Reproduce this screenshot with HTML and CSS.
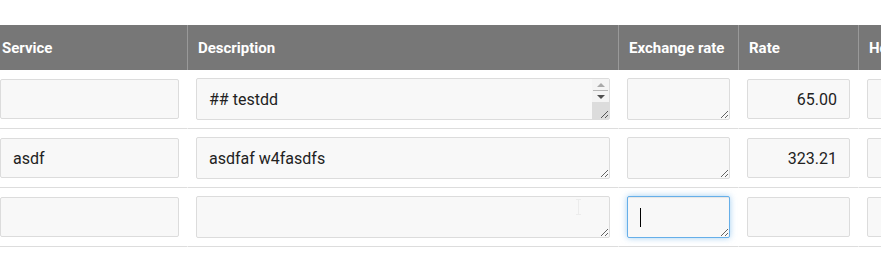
FILE: index.html
```html
<!DOCTYPE html>
<html>
<head>
<meta charset="utf-8">
<link rel="stylesheet" href="styles.css">
</head>
<body>
<div class="viewport">
  <div class="sheet">
    <div class="row head">
      <div class="hcell">Service</div>
      <div class="hcell">Description</div>
      <div class="hcell">Exchange rate</div>
      <div class="hcell">Rate</div>
      <div class="hcell">Hours</div>
    </div>
    <div class="row">
      <div class="cell"><input class="field" type="text" value=""></div>
      <div class="cell">
        <div class="ta-wrap">
          <textarea class="area">## testdd</textarea>
          <div class="fake-sb">
            <div class="sb-btn"><span class="arr-up"></span></div>
            <div class="sb-line"></div>
            <div class="sb-btn"><span class="arr-down"></span></div>
            <div class="sb-corner">
              <svg width="12" height="12" viewBox="0 0 12 12"><path d="M4 11 L11 4 M8 11 L11 8" stroke="#555" stroke-width="1" fill="none"/></svg>
            </div>
          </div>
        </div>
      </div>
      <div class="cell"><textarea class="area"></textarea></div>
      <div class="cell"><input class="field num" type="text" value="65.00"></div>
      <div class="cell"><input class="field" type="text" value=""></div>
    </div>
    <div class="row">
      <div class="cell"><input class="field" type="text" value="asdf"></div>
      <div class="cell"><textarea class="area">asdfaf w4fasdfs</textarea></div>
      <div class="cell"><textarea class="area"></textarea></div>
      <div class="cell"><input class="field num" type="text" value="323.21"></div>
      <div class="cell"><input class="field" type="text" value=""></div>
    </div>
    <div class="row">
      <div class="cell"><input class="field" type="text" value=""></div>
      <div class="cell">
        <div class="ta-wrap">
          <textarea class="area"></textarea>
          <svg class="ibeam" width="7" height="16" viewBox="0 0 7 16"><path d="M1 0.5 H6 M3.5 0.5 V15.5 M1 15.5 H6" stroke="#ececec" stroke-width="1" fill="none"/></svg>
        </div>
      </div>
      <div class="cell">
        <div class="ta-wrap">
          <textarea class="area focused"></textarea>
          <span class="caret"></span>
        </div>
      </div>
      <div class="cell"><input class="field num" type="text" value=""></div>
      <div class="cell"><input class="field" type="text" value=""></div>
    </div>
  </div>
</div>
</body>
</html>
```

FILE: styles.css
```css
html, body {
  margin: 0;
  padding: 0;
  background: #fff;
  overflow: hidden;
}

.viewport {
  width: 881px;
  height: 256px;
  overflow: hidden;
  padding-top: 25px;
  box-sizing: border-box;
  font-family: Roboto, "Liberation Sans", sans-serif;
}

.sheet {
  margin-left: -8px;
  width: max-content;
}

.row {
  display: grid;
  grid-template-columns: 196px 431px 120px 120px 120px;
}

.hcell {
  background: #777777;
  height: 45px;
  box-sizing: border-box;
  border-right: 1px solid rgba(255, 255, 255, 0.25);
  padding: 0 10px;
  display: flex;
  align-items: center;
  color: #fff;
  font-weight: 700;
  font-size: 15px;
  white-space: nowrap;
  overflow: hidden;
}

.cell {
  box-sizing: border-box;
  height: 59px;
  padding: 8px;
  border-bottom: 1px solid #dddddd;
  border-right: 1px solid #ffffff;
  display: flex;
  align-items: center;
}

.field,
.area {
  display: block;
  width: 100%;
  box-sizing: border-box;
  margin: 0;
  background: #f8f8f8;
  border: 1px solid #dcdcdc;
  border-radius: 2px;
  font-family: Roboto, "Liberation Sans", sans-serif;
  font-size: 16px;
  color: #222;
  outline: none;
}

.field {
  height: 40px;
  padding: 0 12px;
}

.field.num {
  text-align: right;
}

.area {
  height: 42px;
  padding: 11px 12px;
  line-height: normal;
  resize: both;
  overflow: hidden;
}

.area.focused {
  border-color: #66afe9;
  box-shadow: inset 0 1px 1px rgba(0, 0, 0, 0.075), 0 0 6px rgba(102, 175, 233, 0.6);
}

.ta-wrap {
  position: relative;
  width: 100%;
}

.fake-sb {
  position: absolute;
  top: 1px;
  right: 1px;
  bottom: 1px;
  width: 17px;
  display: flex;
  flex-direction: column;
  background: #f4f4f4;
}

.sb-btn {
  height: 11px;
  display: flex;
  align-items: center;
  justify-content: center;
}

.sb-line {
  height: 1px;
  margin: 0 1px;
  background: #b8b8b8;
}

.arr-up {
  width: 0;
  height: 0;
  border-left: 4px solid transparent;
  border-right: 4px solid transparent;
  border-bottom: 4px solid #a9a9a9;
}

.arr-down {
  width: 0;
  height: 0;
  border-left: 4px solid transparent;
  border-right: 4px solid transparent;
  border-top: 4px solid #505050;
}

.sb-corner {
  margin-top: auto;
  height: 17px;
  background: #dcdcdc;
  display: flex;
  align-items: flex-end;
  justify-content: flex-end;
}

.sb-corner svg {
  display: block;
}

.ibeam {
  position: absolute;
  left: 379px;
  top: 3px;
}

.caret {
  position: absolute;
  left: 13px;
  top: 12px;
  width: 1px;
  height: 19px;
  background: #000;
}
```
